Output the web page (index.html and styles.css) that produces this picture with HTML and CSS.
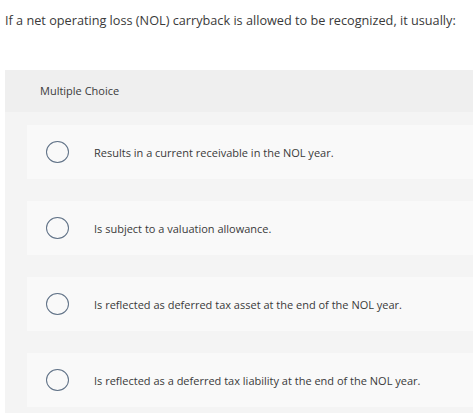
FILE: index.html
```html
<!DOCTYPE html>
<html>
<head>
<meta charset="utf-8">
<link rel="stylesheet" href="styles.css">
</head>
<body>
<p class="question">If a net operating loss (NOL) carryback is allowed to be recognized, it usually:</p>
<div class="panel">
  <div class="panel-head">Multiple Choice</div>
  <div class="options">
    <div class="option"><span class="radio"></span><span class="label">Results in a current receivable in the NOL year.</span></div>
    <div class="option"><span class="radio"></span><span class="label">Is subject to a valuation allowance.</span></div>
    <div class="option"><span class="radio"></span><span class="label">Is reflected as deferred tax asset at the end of the NOL year.</span></div>
    <div class="option"><span class="radio"></span><span class="label">Is reflected as a deferred tax liability at the end of the NOL year.</span></div>
  </div>
</div>
</body>
</html>
```
FILE: styles.css
```css
html, body {
  margin: 0;
  padding: 0;
  background: #ffffff;
}
body {
  font-family: "Open Sans", "Lato", sans-serif;
  color: #3a3a3a;
}
.question {
  margin: 0;
  padding: 12px 0 0 5px;
  height: 57px;
  box-sizing: border-box;
  font-family: "Open Sans", sans-serif;
  font-size: 12.7px;
  line-height: 17px;
  color: #3a3a3a;
}
.panel {
  margin: 13px 1px 0 5px;
  background: #f4f4f4;
  padding-bottom: 6px;
}
.panel-head {
  background: #efefef;
  height: 42px;
  box-sizing: border-box;
  padding: 13px 0 0 35px;
  font-size: 11px;
  line-height: 15px;
}
.options {
  display: flex;
  flex-direction: column;
  gap: 22px;
  padding: 13px 0 0 22px;
}
.option {
  background: #f9f9f9;
  height: 54px;
  display: flex;
  align-items: center;
}
.radio {
  width: 21px;
  height: 20px;
  border: 1.5px solid #5f7186;
  border-radius: 50%;
  margin-left: 19px;
  flex: none;
}
.label {
  margin-left: 25px;
  font-size: 11px;
}
```
